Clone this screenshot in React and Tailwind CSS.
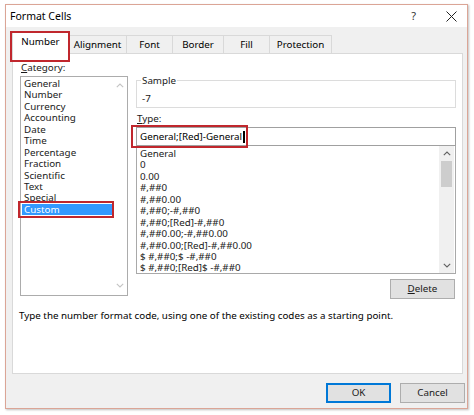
const categories = [
  "General",
  "Number",
  "Currency",
  "Accounting",
  "Date",
  "Time",
  "Percentage",
  "Fraction",
  "Scientific",
  "Text",
  "Special",
  "Custom",
];

const formats = [
  "General",
  "0",
  "0.00",
  "#,##0",
  "#,##0.00",
  "#,##0;-#,##0",
  "#,##0;[Red]-#,##0",
  "#,##0.00;-#,##0.00",
  "#,##0.00;[Red]-#,##0.00",
  "$ #,##0;$ -#,##0",
  "$ #,##0;[Red]$ -#,##0",
];

const tabs = [
  { name: "Number", w: "w-[57px]" },
  { name: "Alignment", w: "w-[59px]" },
  { name: "Font", w: "w-[47px]" },
  { name: "Border", w: "w-[52px]" },
  { name: "Fill", w: "w-[47px]" },
  { name: "Protection", w: "w-[63px]" },
];

function Chevron({ up, color }) {
  return (
    <svg width="8" height="5" viewBox="0 0 8 5">
      <path
        d={up ? "M0.8 4.2 L4 1 L7.2 4.2" : "M0.8 0.8 L4 4 L7.2 0.8"}
        fill="none"
        stroke={color}
        strokeWidth="1.1"
      />
    </svg>
  );
}

function Button({ children, focused }) {
  return (
    <div
      className={
        "w-[65px] h-[20px] flex items-center justify-center bg-[#e1e1e1] " +
        (focused ? "border-2 border-[#0078d7]" : "border border-[#adadad]")
      }
    >
      {children}
    </div>
  );
}

export default function App() {
  return (
    <div className="w-[474px] h-[415px] bg-white pt-[4px] pl-[5px] text-[9.8px] leading-[12px] text-[#1a1a1a] [font-family:'Noto_Sans',sans-serif]">
      <div className="w-[463px] h-[405px] border border-[#dba596] shadow-[1px_1px_2px_rgba(0,0,0,0.25)] flex flex-col">
        {/* title bar */}
        <div className="h-[22px] bg-white flex items-center pl-[4px] pr-[10px] shrink-0">
          <span className="text-[10.5px] text-black">Format Cells</span>
          <div className="flex-1" />
          <span className="text-[11px] text-[#333] mr-[30px]">?</span>
          <svg width="11" height="11" viewBox="0 0 11 11">
            <path d="M0.5 0.5 L10.5 10.5 M10.5 0.5 L0.5 10.5" stroke="#222" strokeWidth="1" />
          </svg>
        </div>

        {/* body */}
        <div className="flex-1 bg-[#f0f0f0] flex flex-col pl-[6px] pr-[3px]">
          {/* tabs */}
          <div className="h-[26px] pt-[4px] flex items-end shrink-0">
            {tabs.map((t, i) =>
              i === 0 ? (
                <div
                  key={t.name}
                  className={
                    t.w +
                    " relative z-10 h-[23px] -mb-[1px] bg-white border-l border-t border-r border-[#d9d9d9] flex items-center justify-center pb-[2px] text-black"
                  }
                >
                  {t.name}
                  <div className="absolute -left-[3px] -top-[1px] w-[60px] h-[31px] border-2 border-[#c0272d]" />
                </div>
              ) : (
                <div
                  key={t.name}
                  className={
                    t.w +
                    " -ml-[1px] h-[18px] bg-[#f0f0f0] border-l border-t border-r border-[#d9d9d9] flex items-center justify-center text-black"
                  }
                >
                  {t.name}
                </div>
              )
            )}
          </div>

          {/* panel */}
          <div className="w-[451px] h-[321px] bg-white border border-[#d9d9d9] flex flex-col shrink-0">
            <div className="flex">
              {/* category column */}
              <div className="ml-[7px] w-[108px] flex flex-col">
                <div className="mt-[8px] h-[12px] pl-[1px]">
                  <span className="underline underline-offset-[1px]">C</span>ategory:
                </div>
                <div className="mt-[2px] h-[220px] border border-[#acacac] flex">
                  <div className="flex-1 flex flex-col pt-[1px] pl-[1px]">
                    {categories.map((c) => (
                      <div
                        key={c}
                        className={
                          "h-[11.45px] leading-[11.45px] pl-[2px] relative " +
                          (c === "Custom" ? "bg-[#3399ff] text-white" : "")
                        }
                      >
                        {c}
                        {c === "Custom" && (
                          <div className="absolute -left-[4px] -top-[3px] w-[96px] h-[17px] border-2 border-[#c0272d]" />
                        )}
                      </div>
                    ))}
                  </div>
                  <div className="w-[15px] flex flex-col items-center justify-between pt-[6px] pb-[7px]">
                    <Chevron up color="#c4c4c4" />
                    <Chevron color="#c4c4c4" />
                  </div>
                </div>
              </div>

              {/* right column */}
              <div className="ml-[8px] w-[320px] flex flex-col">
                <div className="mt-[26px] h-[28px] border border-[#dcdcdc] flex flex-col">
                  <div className="-mt-[6px] ml-[4px] w-fit px-[1px] bg-white h-[12px]">Sample</div>
                  <div className="mt-[6px] ml-[5px]">-7</div>
                </div>
                <div className="mt-[5px] h-[12px] pl-[1px]">
                  <span className="underline underline-offset-[1px]">T</span>ype:
                </div>
                <div className="mt-[2px] h-[19px] border border-[#a0a0a0] relative flex items-center pl-[3px] text-black">
                  General;[Red]-General
                  <span className="ml-[1px] w-[1.5px] h-[12px] bg-black" />
                  <div className="absolute -left-[6px] -top-[3px] w-[117px] h-[23px] border-2 border-[#c0272d]" />
                </div>
                <div className="h-[129px] -mt-[1px] border border-[#a9a9a9] flex">
                  <div className="flex-1 overflow-hidden flex flex-col pt-[2px] pl-[3px]">
                    {formats.map((f) => (
                      <div key={f} className="h-[11.45px] leading-[11.45px] shrink-0 whitespace-nowrap">
                        {f}
                      </div>
                    ))}
                  </div>
                  <div className="w-[15px] bg-[#f0f0f0] flex flex-col items-center mr-[1px]">
                    <div className="h-[15px] flex items-center justify-center">
                      <Chevron up color="#606060" />
                    </div>
                    <div className="w-[11px] h-[26px] bg-[#cdcdcd]" />
                    <div className="flex-1" />
                    <div className="h-[15px] flex items-center justify-center">
                      <Chevron color="#606060" />
                    </div>
                  </div>
                </div>
                <div className="mt-[5px] flex justify-end pr-[1px]">
                  <Button>
                    <span className="underline underline-offset-[1px]">D</span>elete
                  </Button>
                </div>
              </div>
            </div>

            <div className="mt-[11px] ml-[6px] text-black">
              Type the number format code, using one of the existing codes as a starting point.
            </div>
          </div>

          {/* footer */}
          <div className="flex justify-end gap-[9px] mt-[9px] -mr-[1px]">
            <Button focused>OK</Button>
            <Button>Cancel</Button>
          </div>
        </div>
      </div>
    </div>
  );
}
